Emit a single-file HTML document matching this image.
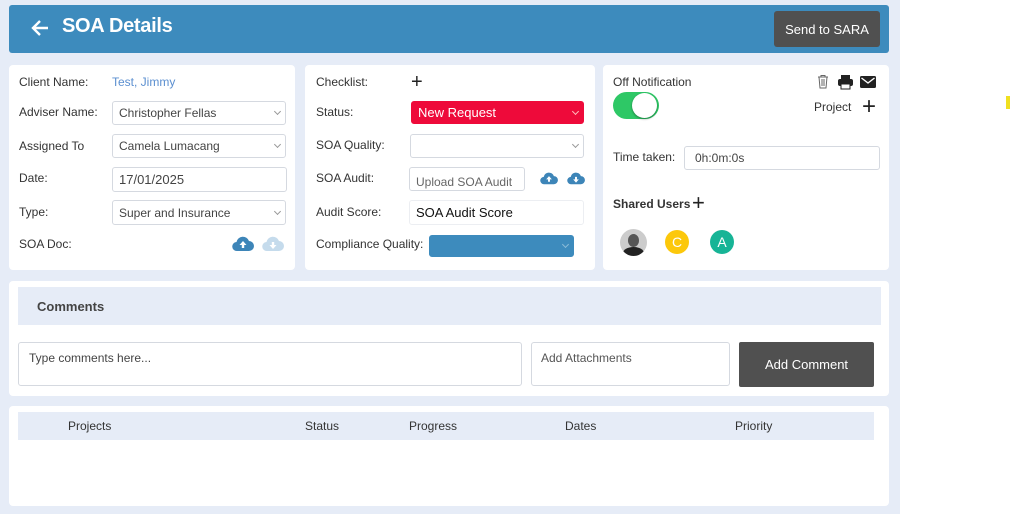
<!DOCTYPE html>
<html><head><style>
*{box-sizing:border-box;margin:0;padding:0}
body{width:1011px;height:514px;background:#fff;font-family:"Liberation Sans",sans-serif;font-size:12px;color:#333;position:relative;overflow:hidden}
.bg{position:absolute;left:0;top:0;width:900px;height:514px;background:#e6ecf7}
.abs{position:absolute}
.panel{position:absolute;background:#fff;border-radius:4px}
.lbl{position:absolute;font-size:12px;color:#333}
.inp{position:absolute;border:1px solid #d5d9e0;border-radius:3px;background:#fff;font-size:12px;color:#444;padding-left:6px;display:flex;align-items:center}
.chev{position:absolute;right:5px;top:50%;margin-top:-4px;width:5px;height:5px;border-right:1px solid #999;border-bottom:1px solid #999;transform:rotate(45deg)}
.plus{position:absolute;font-size:20px;line-height:20px;color:#222}
</style></head><body>
<div class="bg"></div>
<div class="abs" style="left:9px;top:5px;width:880px;height:48px;background:#3d8bbd;border-radius:3px"></div>
<svg class="abs" style="left:30px;top:19px" width="20" height="18" viewBox="0 0 20 18"><path d="M18 9H3M10 2L3 9l7 7" stroke="#fff" stroke-width="2.4" fill="none"/></svg>
<div class="abs" style="left:62px;top:15px;color:#fff;font-size:20px;font-weight:bold;letter-spacing:-0.3px">SOA Details</div>
<div class="abs" style="left:774px;top:11px;width:106px;height:36px;background:#505050;border-radius:3px;color:#fff;font-size:13px;display:flex;align-items:center;justify-content:center">Send to SARA</div>

<div class="panel" style="left:9px;top:65px;width:286px;height:205px"></div>
<div class="lbl" style="left:19px;top:75px">Client Name:</div>
<div class="lbl" style="left:112px;top:75px;color:#5b8fd0">Test, Jimmy</div>
<div class="lbl" style="left:19px;top:105px">Adviser Name:</div>
<div class="inp" style="left:112px;top:101px;width:174px;height:24px">Christopher Fellas<span class="chev"></span></div>
<div class="lbl" style="left:19px;top:139px">Assigned To</div>
<div class="inp" style="left:112px;top:134px;width:174px;height:24px">Camela Lumacang<span class="chev"></span></div>
<div class="lbl" style="left:19px;top:171px">Date:</div>
<div class="inp" style="left:112px;top:167px;width:175px;height:25px;font-size:13px">17/01/2025</div>
<div class="lbl" style="left:19px;top:205px">Type:</div>
<div class="inp" style="left:112px;top:200px;width:174px;height:25px">Super and Insurance<span class="chev"></span></div>
<div class="lbl" style="left:19px;top:237px">SOA Doc:</div>
<svg class="abs" style="left:232px;top:236px" width="22" height="16" viewBox="0 0 22 16"><path d="M5 15a4.5 4.5 0 0 1-.5-9A6.5 6.5 0 0 1 17 5a5 5 0 0 1 0 10z" fill="#3d85b8"/><path d="M11 5l-3.5 4h2.3v3h2.4V9h2.3z" fill="#fff"/></svg>
<svg class="abs" style="left:262px;top:236px" width="22" height="16" viewBox="0 0 22 16"><path d="M5 15a4.5 4.5 0 0 1-.5-9A6.5 6.5 0 0 1 17 5a5 5 0 0 1 0 10z" fill="#c5dbec"/><path d="M11 13l-3.5-4h2.3V6h2.4v3h2.3z" fill="#fff"/></svg>

<div class="panel" style="left:305px;top:65px;width:290px;height:205px"></div>
<div class="lbl" style="left:316px;top:75px">Checklist:</div>
<div class="plus" style="left:411px;top:72px;font-weight:300">+</div>
<div class="lbl" style="left:316px;top:105px">Status:</div>
<div class="inp" style="left:411px;top:101px;width:173px;height:23px;background:#ee0a3a;border-color:#ee0a3a;color:#fff;font-size:13px">New Request<span class="chev" style="border-color:#fbb"></span></div>
<div class="lbl" style="left:316px;top:138px">SOA Quality:</div>
<div class="inp" style="left:410px;top:134px;width:174px;height:24px"><span class="chev"></span></div>
<div class="lbl" style="left:316px;top:171px">SOA Audit:</div>
<div class="inp" style="left:409px;top:167px;width:116px;height:24px;color:#666;padding-top:6px">Upload SOA Audit</div>
<svg class="abs" style="left:540px;top:172px" width="18" height="13" viewBox="0 0 22 16"><path d="M5 15a4.5 4.5 0 0 1-.5-9A6.5 6.5 0 0 1 17 5a5 5 0 0 1 0 10z" fill="#3d85b8"/><path d="M11 5l-3.5 4h2.3v3h2.4V9h2.3z" fill="#fff"/></svg>
<svg class="abs" style="left:567px;top:172px" width="18" height="13" viewBox="0 0 22 16"><path d="M5 15a4.5 4.5 0 0 1-.5-9A6.5 6.5 0 0 1 17 5a5 5 0 0 1 0 10z" fill="#3d85b8"/><path d="M11 13l-3.5-4h2.3V6h2.4v3h2.3z" fill="#fff"/></svg>
<div class="lbl" style="left:316px;top:205px">Audit Score:</div>
<div class="inp" style="left:409px;top:200px;width:175px;height:25px;color:#111;font-size:13px;border-color:#eceef2">SOA Audit Score</div>
<div class="lbl" style="left:316px;top:237px">Compliance Quality:</div>
<div class="inp" style="left:429px;top:235px;width:145px;height:22px;background:#3d8bbd;border-color:#3d8bbd"><span class="chev" style="border-color:#8bbbd8"></span></div>

<div class="panel" style="left:603px;top:65px;width:286px;height:205px"></div>
<div class="lbl" style="left:613px;top:75px">Off Notification</div>
<div class="abs" style="left:613px;top:92px;width:46px;height:27px;border-radius:14px;background:#2ec866"></div>
<div class="abs" style="left:632px;top:93px;width:25px;height:25px;border-radius:50%;background:#fff;box-shadow:0 1px 2px rgba(0,0,0,.4)"></div>
<svg class="abs" style="left:817px;top:74px" width="12" height="15" viewBox="0 0 12 15"><path d="M1 3h10M4 3V1.5h4V3M2 3l1 11h6l1-11M5 5v7M7 5v7" stroke="#666" fill="none"/></svg>
<svg class="abs" style="left:837px;top:74px" width="17" height="16" viewBox="0 0 17 16"><rect x="4" y="1" width="9" height="4" fill="#222"/><rect x="1" y="5" width="15" height="7" rx="2" fill="#222"/><rect x="4" y="10" width="9" height="5" fill="#fff" stroke="#222"/></svg>
<svg class="abs" style="left:860px;top:76px" width="16" height="12" viewBox="0 0 16 12"><rect width="16" height="12" rx="1.5" fill="#222"/><path d="M1.5 2l6.5 5 6.5-5" stroke="#fff" stroke-width="1.4" fill="none"/></svg>
<div class="lbl" style="left:814px;top:100px">Project</div>
<div class="plus" style="left:862px;top:97px;font-size:24px">+</div>
<div class="lbl" style="left:613px;top:150px">Time taken:</div>
<div class="inp" style="left:684px;top:146px;width:196px;height:24px;padding-left:10px">0h:0m:0s</div>
<div class="lbl" style="left:613px;top:197px;font-weight:bold">Shared Users</div>
<div class="plus" style="left:692px;top:193px;font-size:22px">+</div>
<div class="abs" style="left:620px;top:229px;width:27px;height:27px;border-radius:50%;background:#ccc;overflow:hidden"><div style="position:absolute;left:8px;top:5px;width:11px;height:13px;border-radius:50%;background:#555"></div><div style="position:absolute;left:3px;top:18px;width:21px;height:12px;border-radius:50%;background:#222"></div></div>
<div class="abs" style="left:665px;top:230px;width:24px;height:24px;border-radius:50%;background:#fcc80b;color:#fff;font-size:14px;text-align:center;line-height:24px">C</div>
<div class="abs" style="left:710px;top:230px;width:24px;height:24px;border-radius:50%;background:#17b496;color:#fff;font-size:14px;text-align:center;line-height:24px">A</div>
<div class="abs" style="left:1006px;top:96px;width:4px;height:13px;background:#f0e020"></div>

<div class="panel" style="left:9px;top:281px;width:880px;height:115px"></div>
<div class="abs" style="left:18px;top:287px;width:863px;height:38px;background:#e6ecf7"></div>
<div class="lbl" style="left:37px;top:299px;font-weight:bold;font-size:13px;color:#444">Comments</div>
<div class="inp" style="left:18px;top:342px;width:504px;height:44px;align-items:flex-start;padding:8px 10px">Type comments here...</div>
<div class="inp" style="left:531px;top:342px;width:199px;height:44px;align-items:flex-start;padding:8px 9px;color:#555">Add Attachments</div>
<div class="abs" style="left:739px;top:342px;width:135px;height:45px;background:#505050;border-radius:2px;color:#fff;font-size:13px;display:flex;align-items:center;justify-content:center">Add Comment</div>

<div class="panel" style="left:9px;top:406px;width:880px;height:100px"></div>
<div class="abs" style="left:18px;top:412px;width:856px;height:28px;background:#e6ecf7"></div>
<div class="lbl" style="left:68px;top:419px">Projects</div>
<div class="lbl" style="left:305px;top:419px">Status</div>
<div class="lbl" style="left:409px;top:419px">Progress</div>
<div class="lbl" style="left:565px;top:419px">Dates</div>
<div class="lbl" style="left:735px;top:419px">Priority</div>
</body></html>
